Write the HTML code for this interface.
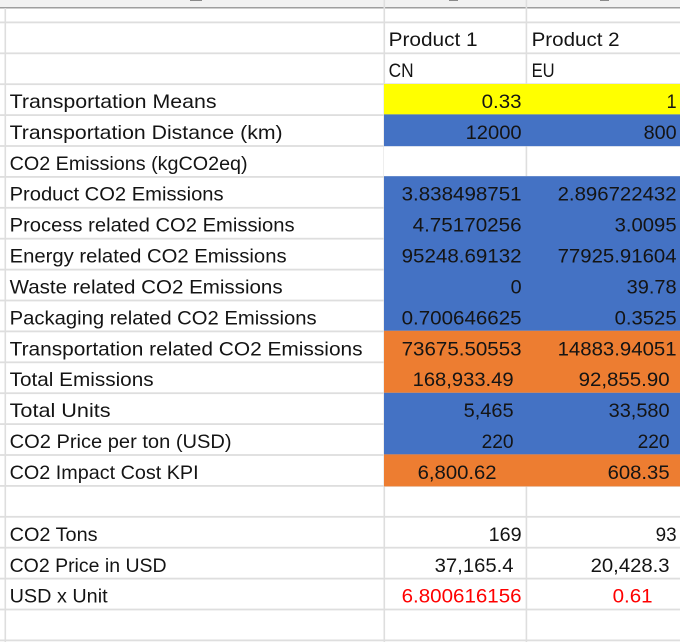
<!DOCTYPE html>
<html><head><meta charset="utf-8"><style>
html,body{margin:0;padding:0;background:#fff;width:680px;height:642px;overflow:hidden}
svg{display:block}
text{font-family:"Liberation Sans",sans-serif;font-size:19.5px;fill:#141414}
.r{fill:#f00}
.t{filter:blur(0.25px)}
</style></head><body>
<svg width="680" height="642" viewBox="0 0 680 642" xmlns="http://www.w3.org/2000/svg">
<rect width="680" height="7" fill="#f1f1f1"/>
<rect y="7" width="680" height="1.5" fill="#9e9e9e"/>
<rect x="190" y="0" width="12" height="1" fill="#8a8a8a"/><rect x="449" y="0" width="9" height="1" fill="#8a8a8a"/><rect x="600" y="0" width="9" height="1" fill="#8a8a8a"/>
<g fill="#dedede">
<rect x="4.5" y="8" width="1.6" height="634"/><rect x="383.5" y="0" width="1.6" height="642"/><rect x="525.6" y="0" width="1.6" height="642"/>
<rect y="21.5" width="680" height="1.8"/><rect y="52.4" width="680" height="1.8"/><rect y="83.3" width="680" height="1.8"/><rect y="114.2" width="680" height="1.8"/><rect y="145.1" width="680" height="1.8"/><rect y="176" width="680" height="1.8"/><rect y="206.9" width="680" height="1.8"/><rect y="237.8" width="680" height="1.8"/><rect y="268.7" width="680" height="1.8"/><rect y="299.6" width="680" height="1.8"/><rect y="330.5" width="680" height="1.8"/><rect y="361.4" width="680" height="1.8"/><rect y="392.3" width="680" height="1.8"/><rect y="423.2" width="680" height="1.8"/><rect y="454.1" width="680" height="1.8"/><rect y="485" width="680" height="1.8"/><rect y="515.9" width="680" height="1.8"/><rect y="546.8" width="680" height="1.8"/><rect y="577.7" width="680" height="1.8"/><rect y="608.6" width="680" height="1.8"/><rect y="639.5" width="680" height="1.8"/>
</g>
<rect x="384" y="84" width="296" height="30.4" fill="#ffff00"/>
<rect x="384" y="114.4" width="296" height="31.8" fill="#4472c4"/>
<rect x="384" y="146.4" width="296" height="29.8" fill="#fff"/><rect x="525.6" y="146.4" width="1.6" height="29.8" fill="#dedede"/>
<rect x="384" y="176.2" width="296" height="154.6" fill="#4472c4"/>
<rect x="384" y="330.8" width="296" height="62" fill="#ed7d31"/>
<rect x="384" y="392.8" width="296" height="61.6" fill="#4472c4"/>
<rect x="384" y="454.4" width="296" height="32" fill="#ed7d31"/>
<g class="t" transform="translate(-0.4,0)">
<text x="389" y="46" textLength="89" lengthAdjust="spacingAndGlyphs">Product 1</text>
<text x="532" y="46" textLength="88" lengthAdjust="spacingAndGlyphs">Product 2</text>
<text x="389" y="77" textLength="25" lengthAdjust="spacingAndGlyphs">CN</text>
<text x="532" y="77" textLength="23" lengthAdjust="spacingAndGlyphs">EU</text>

<text x="10" y="108" textLength="207" lengthAdjust="spacingAndGlyphs">Transportation Means</text>
<text x="482" y="108" textLength="40" lengthAdjust="spacingAndGlyphs">0.33</text>
<text x="667" y="108" textLength="10" lengthAdjust="spacingAndGlyphs">1</text>

<text x="10" y="139" textLength="273" lengthAdjust="spacingAndGlyphs">Transportation Distance (km)</text>
<text x="466" y="139" textLength="56" lengthAdjust="spacingAndGlyphs">12000</text>
<text x="644" y="139" textLength="33" lengthAdjust="spacingAndGlyphs">800</text>

<text x="10" y="170" textLength="238" lengthAdjust="spacingAndGlyphs">CO2 Emissions (kgCO2eq)</text>

<text x="10" y="200.5" textLength="214" lengthAdjust="spacingAndGlyphs">Product CO2 Emissions</text>
<text x="402" y="200.5" textLength="120" lengthAdjust="spacingAndGlyphs">3.838498751</text>
<text x="558" y="200.5" textLength="119" lengthAdjust="spacingAndGlyphs">2.896722432</text>

<text x="10" y="231.5" textLength="285" lengthAdjust="spacingAndGlyphs">Process related CO2 Emissions</text>
<text x="413" y="231.5" textLength="109" lengthAdjust="spacingAndGlyphs">4.75170256</text>
<text x="615" y="231.5" textLength="62" lengthAdjust="spacingAndGlyphs">3.0095</text>

<text x="10" y="262.5" textLength="277" lengthAdjust="spacingAndGlyphs">Energy related CO2 Emissions</text>
<text x="402" y="262.5" textLength="120" lengthAdjust="spacingAndGlyphs">95248.69132</text>
<text x="558" y="262.5" textLength="119" lengthAdjust="spacingAndGlyphs">77925.91604</text>

<text x="10" y="293.5" textLength="273" lengthAdjust="spacingAndGlyphs">Waste related CO2 Emissions</text>
<text x="511" y="293.5" textLength="11" lengthAdjust="spacingAndGlyphs">0</text>
<text x="627" y="293.5" textLength="50" lengthAdjust="spacingAndGlyphs">39.78</text>

<text x="10" y="324.5" textLength="307" lengthAdjust="spacingAndGlyphs">Packaging related CO2 Emissions</text>
<text x="402" y="324.5" textLength="120" lengthAdjust="spacingAndGlyphs">0.700646625</text>
<text x="615" y="324.5" textLength="62" lengthAdjust="spacingAndGlyphs">0.3525</text>

<text x="10" y="355.5" textLength="353" lengthAdjust="spacingAndGlyphs">Transportation related CO2 Emissions</text>
<text x="402" y="355.5" textLength="120" lengthAdjust="spacingAndGlyphs">73675.50553</text>
<text x="558" y="355.5" textLength="119" lengthAdjust="spacingAndGlyphs">14883.94051</text>

<text x="10" y="386" textLength="144" lengthAdjust="spacingAndGlyphs">Total Emissions</text>
<text x="413" y="386" textLength="101" lengthAdjust="spacingAndGlyphs">168,933.49</text>
<text x="579" y="386" textLength="91" lengthAdjust="spacingAndGlyphs">92,855.90</text>

<text x="10" y="417" textLength="101" lengthAdjust="spacingAndGlyphs">Total Units</text>
<text x="464" y="417" textLength="50" lengthAdjust="spacingAndGlyphs">5,465</text>
<text x="609" y="417" textLength="61" lengthAdjust="spacingAndGlyphs">33,580</text>

<text x="10" y="448" textLength="222" lengthAdjust="spacingAndGlyphs">CO2 Price per ton (USD)</text>
<text x="482" y="448" textLength="32" lengthAdjust="spacingAndGlyphs">220</text>
<text x="638" y="448" textLength="32" lengthAdjust="spacingAndGlyphs">220</text>

<text x="10" y="479" textLength="189" lengthAdjust="spacingAndGlyphs">CO2 Impact Cost KPI</text>
<text x="418" y="479" textLength="79" lengthAdjust="spacingAndGlyphs">6,800.62</text>
<text x="608" y="479" textLength="62" lengthAdjust="spacingAndGlyphs">608.35</text>

<text x="10" y="541" textLength="88" lengthAdjust="spacingAndGlyphs">CO2 Tons</text>
<text x="489" y="541" textLength="33" lengthAdjust="spacingAndGlyphs">169</text>
<text x="656" y="541" textLength="21" lengthAdjust="spacingAndGlyphs">93</text>

<text x="10" y="572" textLength="157" lengthAdjust="spacingAndGlyphs">CO2 Price in USD</text>
<text x="435" y="572" textLength="79" lengthAdjust="spacingAndGlyphs">37,165.4</text>
<text x="591" y="572" textLength="79" lengthAdjust="spacingAndGlyphs">20,428.3</text>

<text x="10" y="602.5" textLength="98" lengthAdjust="spacingAndGlyphs">USD x Unit</text>
<text class="r" x="402" y="602.5" textLength="120" lengthAdjust="spacingAndGlyphs">6.800616156</text>
<text class="r" x="613" y="602.5" textLength="40" lengthAdjust="spacingAndGlyphs">0.61</text>
</g>
</svg>
</body></html>
